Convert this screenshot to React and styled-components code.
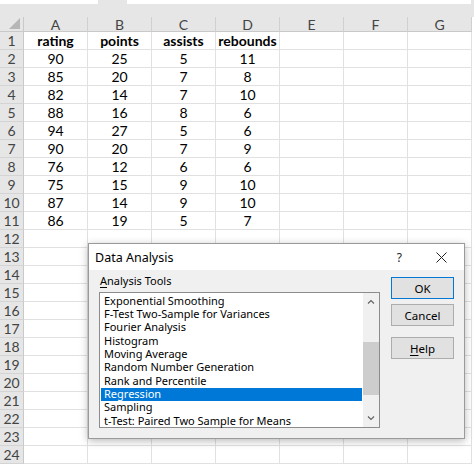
import React from 'react'
import styled, { createGlobalStyle, css } from 'styled-components'

const GlobalStyle = createGlobalStyle`
    html, body {
        margin: 0;
        padding: 0;
        background: #fff;
        overflow: hidden;
    }
    * {
        box-sizing: border-box;
    }
`

const columns = ['A', 'B', 'C', 'D', 'E', 'F', 'G']

const data = [
    ['rating', 'points', 'assists', 'rebounds'],
    [90, 25, 5, 11],
    [85, 20, 7, 8],
    [82, 14, 7, 10],
    [88, 16, 8, 6],
    [94, 27, 5, 6],
    [90, 20, 7, 9],
    [76, 12, 6, 6],
    [75, 15, 9, 10],
    [87, 14, 9, 10],
    [86, 19, 5, 7],
]

const tools = [
    'Exponential Smoothing',
    'F-Test Two-Sample for Variances',
    'Fourier Analysis',
    'Histogram',
    'Moving Average',
    'Random Number Generation',
    'Rank and Percentile',
    'Regression',
    'Sampling',
    't-Test: Paired Two Sample for Means',
]

const TOTAL_ROWS = 24

function Chevron({ up }) {
    return (
        <svg width="8" height="5" viewBox="0 0 8 5">
            <polyline
                points={up ? '1,4.5 4,1.5 7,4.5' : '1,0.5 4,3.5 7,0.5'}
                fill="none"
                stroke="#606060"
                strokeWidth="1.1"
            />
        </svg>
    )
}

function CloseIcon() {
    return (
        <svg width="11" height="11" viewBox="0 0 11 11">
            <path d="M0.5 0.5 L10.5 10.5 M10.5 0.5 L0.5 10.5" stroke="#222" strokeWidth="1" />
        </svg>
    )
}

function App() {
    return (
        <Page>
            <GlobalStyle />
            <TopBar>
                <NameBox />
                <FormulaBox />
            </TopBar>
            <Sheet>
                <Corner />
                {columns.map((c) => (
                    <ColHeader key={c}>{c}</ColHeader>
                ))}
                <Filler />
                {Array.from({ length: TOTAL_ROWS }, (_, r) => (
                    <React.Fragment key={r}>
                        <RowHeader>{r + 1}</RowHeader>
                        {columns.map((c, i) => (
                            <Cell key={c} $bold={r === 0}>
                                {data[r] && data[r][i] !== undefined ? data[r][i] : ''}
                            </Cell>
                        ))}
                        <Filler />
                    </React.Fragment>
                ))}
            </Sheet>

            <Dialog>
                <TitleBar>
                    <Title>Data Analysis</Title>
                    <TitleButtons>
                        <span>?</span>
                        <CloseIcon />
                    </TitleButtons>
                </TitleBar>
                <DialogBody>
                    <LeftColumn>
                        <Label><u>A</u>nalysis Tools</Label>
                        <ListBox>
                            <Items>
                                {tools.map((t) => (
                                    <Item key={t} $selected={t === 'Regression'}>{t}</Item>
                                ))}
                            </Items>
                            <ScrollBar>
                                <Arrow><Chevron up /></Arrow>
                                <Track>
                                    <Thumb />
                                </Track>
                                <Arrow><Chevron /></Arrow>
                            </ScrollBar>
                        </ListBox>
                    </LeftColumn>
                    <ButtonColumn>
                        <Button $default>OK</Button>
                        <Button>Cancel</Button>
                        <Button $gap><u>H</u>elp</Button>
                    </ButtonColumn>
                </DialogBody>
            </Dialog>
        </Page>
    )
}

export default App

const Page = styled.div`
    position: relative;
    width: 474px;
    height: 467px;
    overflow: hidden;
    font-family: Lato, "Open Sans", sans-serif;
`

const TopBar = styled.div`
    display: flex;
    height: 17px;
    background: #e6e6e6;
`

const NameBox = styled.div`
    width: 98px;
    height: 4px;
    background: #fff;
`

const FormulaBox = styled.div`
    width: 344px;
    height: 4px;
    margin-left: 29px;
    background: #fff;
`

const Sheet = styled.div`
    display: grid;
    grid-template-columns: 24px repeat(7, 64px) 2px;
    grid-template-rows: 15px repeat(${TOTAL_ROWS}, 18px);
`

const headerBase = css`
    background: #e6e6e6;
    color: #444;
    font-size: 14px;
    display: flex;
    align-items: center;
    justify-content: center;
`

const Corner = styled.div`
    position: relative;
    background: #e6e6e6;
    border-right: 1px solid #c9c9c9;
    border-bottom: 1px solid #c9c9c9;

    &::after {
        content: '';
        position: absolute;
        right: 3px;
        bottom: 2px;
        width: 0;
        height: 0;
        border-left: 11px solid transparent;
        border-bottom: 11px solid #b6b6b6;
    }
`

const ColHeader = styled.div`
    ${headerBase}
    border-right: 1px solid #d0d0d0;
    border-bottom: 1px solid #c9c9c9;
`

const RowHeader = styled.div`
    ${headerBase}
    border-right: 1px solid #c9c9c9;
    border-bottom: 1px solid #d4d4d4;
`

const Filler = styled.div`
    background: #fff;
`

const Cell = styled.div`
    border-right: 1px solid #e1e1e1;
    border-bottom: 1px solid #e1e1e1;
    display: flex;
    align-items: center;
    justify-content: center;
    font-size: 14px;
    color: #000;
    font-weight: ${(p) => (p.$bold ? 700 : 400)};
    white-space: nowrap;
`

const Dialog = styled.div`
    position: absolute;
    left: 88px;
    top: 243px;
    width: 377px;
    height: 196px;
    background: #f0f0f0;
    border: 1px solid #9a9a9a;
    box-shadow: 0 2px 8px rgba(0, 0, 0, 0.28);
    font-family: "Noto Sans", "Open Sans", sans-serif;
    font-size: 11px;
    color: #000;
    display: flex;
    flex-direction: column;
`

const TitleBar = styled.div`
    height: 26px;
    background: #fff;
    display: flex;
    align-items: center;
    justify-content: space-between;
    padding: 0 17px 0 6px;
`

const Title = styled.span`
    font-size: 12.5px;
`

const TitleButtons = styled.div`
    display: flex;
    align-items: center;
    gap: 34px;
    font-size: 12px;
    color: #222;
`

const DialogBody = styled.div`
    flex: 1;
    display: flex;
    padding: 0 10px 0 10px;
`

const LeftColumn = styled.div`
    width: 282px;
    display: flex;
    flex-direction: column;
`

const Label = styled.div`
    height: 22px;
    padding: 0 0 2px 1px;
    display: flex;
    align-items: center;

    u {
        text-decoration-thickness: 1px;
        text-underline-offset: 2px;
    }
`

const ListBox = styled.div`
    height: 136px;
    background: #fff;
    border: 1px solid #8c8c8c;
    display: flex;
`

const Items = styled.div`
    flex: 1;
    padding: 1.7px 1px 0 1px;
`

const Item = styled.div`
    height: 13.33px;
    line-height: 11.5px;
    padding-left: 3px;
    white-space: nowrap;
    background: ${(p) => (p.$selected ? '#0078d7' : 'transparent')};
    color: ${(p) => (p.$selected ? '#fff' : '#000')};
`

const ScrollBar = styled.div`
    width: 16px;
    background: #f0f0f0;
    display: flex;
    flex-direction: column;
`

const Arrow = styled.div`
    height: 17px;
    display: flex;
    align-items: center;
    justify-content: center;
`

const Track = styled.div`
    flex: 1;
    padding-top: 32px;
    padding-bottom: 15px;
`

const Thumb = styled.div`
    height: 53px;
    background: #cdcdcd;
`

const ButtonColumn = styled.div`
    margin-left: 11px;
    padding-top: 7px;
    display: flex;
    flex-direction: column;
    gap: 5px;
`

const Button = styled.div`
    width: 63px;
    height: 22px;
    background: #e1e1e1;
    border: 1px solid ${(p) => (p.$default ? '#0078d7' : '#adadad')};
    display: flex;
    align-items: center;
    justify-content: center;
    font-size: 11.5px;
    margin-top: ${(p) => (p.$gap ? '6px' : '0')};

    u {
        text-decoration-thickness: 1px;
        text-underline-offset: 2px;
    }
`
